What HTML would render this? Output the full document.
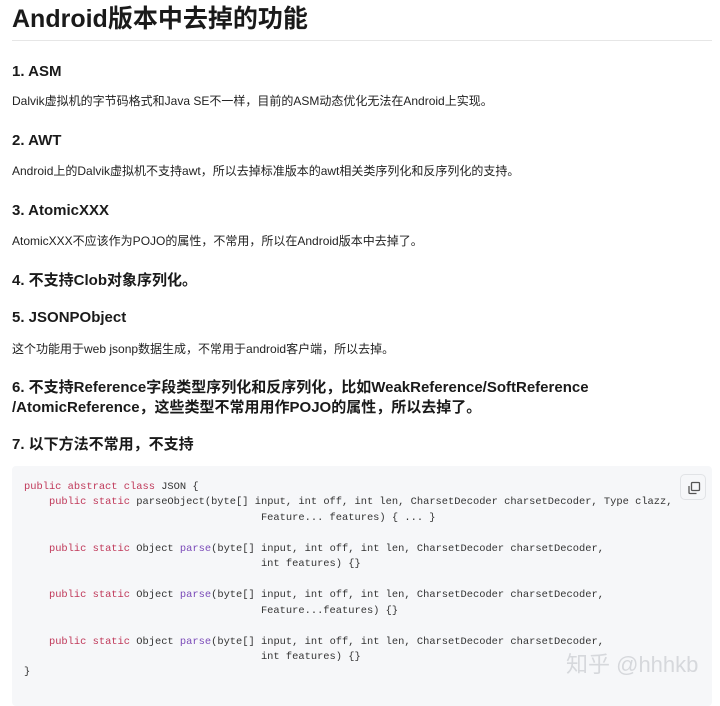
<!DOCTYPE html>
<html><head><meta charset="utf-8"><style>
*{margin:0;padding:0;box-sizing:border-box}
body{width:720px;height:693px;background:#fff;position:relative;overflow:hidden;font-family:"Liberation Sans","Noto Sans CJK SC",sans-serif;color:#1a1a1a}
.a{position:absolute;white-space:nowrap;left:12px}
h1{position:absolute;left:12px;top:3px;font-size:25px;font-weight:bold;line-height:32px;white-space:nowrap}
.hr{position:absolute;left:12px;top:40px;width:700px;height:1px;background:#e6e6e6}
.h{font-size:15px;font-weight:bold;line-height:20px}
.p{font-size:12px;line-height:18px;color:#222}
.code{position:absolute;left:12px;top:466px;width:700px;height:240px;background:#f6f7f9;border-radius:4px}
pre{position:absolute;left:24px;top:480px;font-family:"Liberation Mono",monospace;font-size:10.4px;line-height:15.45px;color:#333}
.k{color:#c0395a}.f{color:#7a4ab8}
.btn{position:absolute;left:680px;top:474px;width:26px;height:26px;border:1px solid #e1e3e6;border-radius:5px;background:#f6f7f9}
.wm{position:absolute;left:566px;top:647px;font-size:22px;color:#d6d8dc;white-space:nowrap}
</style></head><body>
<h1>Android版本中去掉的功能</h1>
<div class="hr"></div>
<div class="a h" style="top:62px">1. ASM</div>
<div class="a p" style="top:92px">Dalvik虚拟机的字节码格式和Java SE不一样，目前的ASM动态优化无法在Android上实现。</div>
<div class="a h" style="top:131px">2. AWT</div>
<div class="a p" style="top:162px">Android上的Dalvik虚拟机不支持awt，所以去掉标准版本的awt相关类序列化和反序列化的支持。</div>
<div class="a h" style="top:201px">3. AtomicXXX</div>
<div class="a p" style="top:232px">AtomicXXX不应该作为POJO的属性，不常用，所以在Android版本中去掉了。</div>
<div class="a h" style="top:271px">4. 不支持Clob对象序列化。</div>
<div class="a h" style="top:308px">5. JSONPObject</div>
<div class="a p" style="top:340px">这个功能用于web jsonp数据生成，不常用于android客户端，所以去掉。</div>
<div class="a h" style="top:378px">6. 不支持Reference字段类型序列化和反序列化，比如WeakReference/SoftReference</div>
<div class="a h" style="top:398px">/AtomicReference，这些类型不常用用作POJO的属性，所以去掉了。</div>
<div class="a h" style="top:435px">7. 以下方法不常用，不支持</div>
<div class="code"></div>
<pre><span class="k">public abstract class</span> JSON {
    <span class="k">public static</span> parseObject(byte[] input, int off, int len, CharsetDecoder charsetDecoder, Type clazz,
                                      Feature... features) { ... }

    <span class="k">public static</span> Object <span class="f">parse</span>(byte[] input, int off, int len, CharsetDecoder charsetDecoder,
                                      int features) {}

    <span class="k">public static</span> Object <span class="f">parse</span>(byte[] input, int off, int len, CharsetDecoder charsetDecoder,
                                      Feature...features) {}

    <span class="k">public static</span> Object <span class="f">parse</span>(byte[] input, int off, int len, CharsetDecoder charsetDecoder,
                                      int features) {}
}</pre>
<div class="btn"><svg width="26" height="26" viewBox="0 0 26 26"><rect x="10.5" y="7.5" width="8" height="8" rx="1" fill="none" stroke="#555" stroke-width="1.3"/><path d="M8 11v6.5a1 1 0 0 0 1 1h6.5" fill="none" stroke="#555" stroke-width="1.3"/></svg></div>
<div class="wm">知乎 @hhhkb</div>
</body></html>
